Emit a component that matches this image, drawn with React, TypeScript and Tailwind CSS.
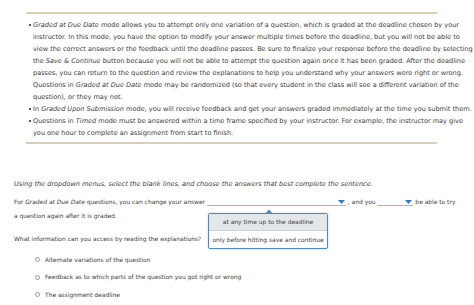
import React from 'react';

const lines1 = [
  <><i>Graded at Due Date</i> mode allows you to attempt only one variation of a question, which is graded at the deadline chosen by your</>,
  <>instructor. In this mode, you have the option to modify your answer multiple times before the deadline, but you will not be able to</>,
  <>view the correct answers or the feedback until the deadline passes. Be sure to finalize your response before the deadline by selecting</>,
  <>the <i>Save &amp; Continue</i> button because you will not be able to attempt the question again once it has been graded. After the deadline</>,
  <>passes, you can return to the question and review the explanations to help you understand why your answers were right or wrong.</>,
  <>Questions in <i>Graded at Due Date</i> mode may be randomized (so that every student in the class will see a different variation of the</>,
  <>question), or they may not.</>,
];

function Bullet({ lines }: { lines: React.ReactNode[] }) {
  return (
    <div className="flex">
      <div className="w-[7px] shrink-0 flex justify-center pt-[5px]">
        <div className="w-[2px] h-[2px] bg-[#555] ml-[1px]" />
      </div>
      <div>
        {lines.map((l, i) => (
          <div key={i} className="whitespace-nowrap">{l}</div>
        ))}
      </div>
    </div>
  );
}

function Blank({ width }: { width: string }) {
  return (
    <span className={`inline-flex items-end justify-end align-baseline h-[8px] border-b border-[#9bb9d6] ${width}`}>
      <svg width="7" height="4" viewBox="0 0 7 4" className="mb-[1px] mr-[1px]">
        <path d="M0 0 L7 0 L3.5 4 Z" fill="#2f7dc0" />
      </svg>
    </span>
  );
}

function Radio({ label }: { label: string }) {
  return (
    <div className="flex items-center h-[17.5px] pl-[21px]">
      <span className="w-[5px] h-[5px] rounded-full border border-[#9a9a9a] bg-white mr-[5px]" />
      <span>{label}</span>
    </div>
  );
}

export default function App() {
  return (
    <div className="relative w-[474px] h-[305px] overflow-hidden bg-white text-[#3d3d3d] font-['DejaVu_Sans',sans-serif] text-[6.55px] leading-[12px]">
      <div className="pt-[12px] pl-[26px] w-[437px]">
        <div className="border-t-2 border-b-2 border-[#d9d1b0] pt-[5px] pb-[3px]">
          <Bullet lines={lines1} />
          <Bullet lines={[<>In <i>Graded Upon Submission</i> mode, you will receive feedback and get your answers graded immediately at the time you submit them.</>]} />
          <Bullet
            lines={[
              <>Questions in <i>Timed</i> mode must be answered within a time frame specified by your instructor. For example, the instructor may give</>,
              <>you one hour to complete an assignment from start to finish.</>,
            ]}
          />
        </div>
      </div>

      <div className="pl-[14px] pt-[34px] text-[5.95px]">
        <p className="italic text-[6.55px]">Using the dropdown menus, select the blank lines, and choose the answers that best complete the sentence.</p>
        <p className="mt-[6px] whitespace-nowrap">
          For <i>Graded at Due Date</i> questions, you can change your answer <Blank width="w-[139px]" /> , and you <Blank width="w-[36px]" /> be able to try
        </p>
        <p className="leading-[13px] mt-[1px]">a question again after it is graded.</p>
        <p className="mt-[11px]">What information can you access by reading the explanations?</p>
        <div className="mt-[6px]">
          <Radio label="Alternate variations of the question" />
          <Radio label="Feedback as to which parts of the question you got right or wrong" />
          <Radio label="The assignment deadline" />
        </div>
      </div>

      <div className="absolute left-[208px] top-[213px] w-[120px] text-[5.95px] rounded-[2px] border-[1.5px] border-[#4a87c6] bg-white shadow-[0_0_2px_rgba(74,135,198,0.4)]">
        <svg width="8" height="5" viewBox="0 0 8 5" className="absolute left-[56px] -top-[5px]">
          <path d="M0 5 L4 0.5 L8 5 Z" fill="#4a87c6" />
        </svg>
        <div className="h-[17px] flex items-center justify-center whitespace-nowrap bg-[#e4e7ea] border-b border-[#c9cfd4]">at any time up to the deadline</div>
        <div className="h-[17px] flex items-center justify-center whitespace-nowrap">only before hitting save and continue</div>
      </div>
    </div>
  );
}
